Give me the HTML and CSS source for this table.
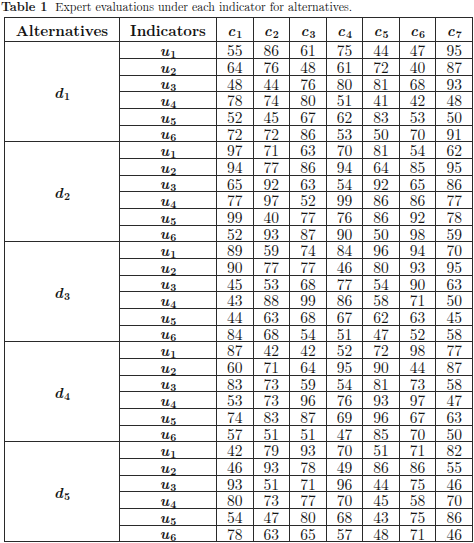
FILE: index.html
```html
<!DOCTYPE html>
<html>
<head>
<meta charset="utf-8">
<link rel="stylesheet" href="styles.css">
</head>
<body>
<div class="caption"><b class="cap-label">Table 1</b> Expert evaluations under each indicator for alternatives.</div>
<table class="tbl">
<colgroup>
<col class="c-alt"><col class="c-ind">
<col class="c-num"><col class="c-num"><col class="c-num"><col class="c-num"><col class="c-num"><col class="c-num"><col class="c-num">
</colgroup>
<thead>
<tr class="head">
<th class="word">Alternatives</th><th class="word">Indicators</th>
<th class="sym"><i>c</i><sub>1</sub></th><th class="sym"><i>c</i><sub>2</sub></th><th class="sym"><i>c</i><sub>3</sub></th><th class="sym"><i>c</i><sub>4</sub></th><th class="sym"><i>c</i><sub>5</sub></th><th class="sym"><i>c</i><sub>6</sub></th><th class="sym"><i>c</i><sub>7</sub></th>
</tr>
</thead>
<tbody>
<tr class="r17"><td class="sym alt" rowspan="6"><i>d</i><sub>1</sub></td><td class="sym ind"><i>u</i><sub>1</sub></td><td>55</td><td>86</td><td>61</td><td>75</td><td>44</td><td>47</td><td>95</td></tr>
<tr class="r17"><td class="sym ind"><i>u</i><sub>2</sub></td><td>64</td><td>76</td><td>48</td><td>61</td><td>72</td><td>40</td><td>87</td></tr>
<tr class="r16"><td class="sym ind"><i>u</i><sub>3</sub></td><td>48</td><td>44</td><td>76</td><td>80</td><td>81</td><td>68</td><td>93</td></tr>
<tr class="r17"><td class="sym ind"><i>u</i><sub>4</sub></td><td>78</td><td>74</td><td>80</td><td>51</td><td>41</td><td>42</td><td>48</td></tr>
<tr class="r17"><td class="sym ind"><i>u</i><sub>5</sub></td><td>52</td><td>45</td><td>67</td><td>62</td><td>83</td><td>53</td><td>50</td></tr>
<tr class="r16"><td class="sym ind"><i>u</i><sub>6</sub></td><td>72</td><td>72</td><td>86</td><td>53</td><td>50</td><td>70</td><td>91</td></tr>

<tr class="r17"><td class="sym alt" rowspan="6"><i>d</i><sub>2</sub></td><td class="sym ind"><i>u</i><sub>1</sub></td><td>97</td><td>71</td><td>63</td><td>70</td><td>81</td><td>54</td><td>62</td></tr>
<tr class="r17"><td class="sym ind"><i>u</i><sub>2</sub></td><td>94</td><td>77</td><td>86</td><td>94</td><td>64</td><td>85</td><td>95</td></tr>
<tr class="r16"><td class="sym ind"><i>u</i><sub>3</sub></td><td>65</td><td>92</td><td>63</td><td>54</td><td>92</td><td>65</td><td>86</td></tr>
<tr class="r17"><td class="sym ind"><i>u</i><sub>4</sub></td><td>77</td><td>97</td><td>52</td><td>99</td><td>86</td><td>86</td><td>77</td></tr>
<tr class="r17"><td class="sym ind"><i>u</i><sub>5</sub></td><td>99</td><td>40</td><td>77</td><td>76</td><td>86</td><td>92</td><td>78</td></tr>
<tr class="r16"><td class="sym ind"><i>u</i><sub>6</sub></td><td>52</td><td>93</td><td>87</td><td>90</td><td>50</td><td>98</td><td>59</td></tr>

<tr class="r17"><td class="sym alt" rowspan="6"><i>d</i><sub>3</sub></td><td class="sym ind"><i>u</i><sub>1</sub></td><td>89</td><td>59</td><td>74</td><td>84</td><td>96</td><td>94</td><td>70</td></tr>
<tr class="r17"><td class="sym ind"><i>u</i><sub>2</sub></td><td>90</td><td>77</td><td>77</td><td>46</td><td>80</td><td>93</td><td>95</td></tr>
<tr class="r16"><td class="sym ind"><i>u</i><sub>3</sub></td><td>45</td><td>53</td><td>68</td><td>77</td><td>54</td><td>90</td><td>63</td></tr>
<tr class="r17"><td class="sym ind"><i>u</i><sub>4</sub></td><td>43</td><td>88</td><td>99</td><td>86</td><td>58</td><td>71</td><td>50</td></tr>
<tr class="r17"><td class="sym ind"><i>u</i><sub>5</sub></td><td>44</td><td>63</td><td>68</td><td>67</td><td>62</td><td>63</td><td>45</td></tr>
<tr class="r16"><td class="sym ind"><i>u</i><sub>6</sub></td><td>84</td><td>68</td><td>54</td><td>51</td><td>47</td><td>52</td><td>58</td></tr>

<tr class="r17"><td class="sym alt" rowspan="6"><i>d</i><sub>4</sub></td><td class="sym ind"><i>u</i><sub>1</sub></td><td>87</td><td>42</td><td>42</td><td>52</td><td>72</td><td>98</td><td>77</td></tr>
<tr class="r17"><td class="sym ind"><i>u</i><sub>2</sub></td><td>60</td><td>71</td><td>64</td><td>95</td><td>90</td><td>44</td><td>87</td></tr>
<tr class="r16"><td class="sym ind"><i>u</i><sub>3</sub></td><td>83</td><td>73</td><td>59</td><td>54</td><td>81</td><td>73</td><td>58</td></tr>
<tr class="r17"><td class="sym ind"><i>u</i><sub>4</sub></td><td>53</td><td>73</td><td>96</td><td>76</td><td>93</td><td>97</td><td>47</td></tr>
<tr class="r17"><td class="sym ind"><i>u</i><sub>5</sub></td><td>74</td><td>83</td><td>87</td><td>69</td><td>96</td><td>67</td><td>63</td></tr>
<tr class="r16"><td class="sym ind"><i>u</i><sub>6</sub></td><td>57</td><td>51</td><td>51</td><td>47</td><td>85</td><td>70</td><td>50</td></tr>

<tr class="r17"><td class="sym alt" rowspan="6"><i>d</i><sub>5</sub></td><td class="sym ind"><i>u</i><sub>1</sub></td><td>42</td><td>79</td><td>93</td><td>70</td><td>51</td><td>71</td><td>82</td></tr>
<tr class="r17"><td class="sym ind"><i>u</i><sub>2</sub></td><td>46</td><td>93</td><td>78</td><td>49</td><td>86</td><td>86</td><td>55</td></tr>
<tr class="r16"><td class="sym ind"><i>u</i><sub>3</sub></td><td>93</td><td>51</td><td>71</td><td>96</td><td>44</td><td>75</td><td>46</td></tr>
<tr class="r17"><td class="sym ind"><i>u</i><sub>4</sub></td><td>80</td><td>73</td><td>77</td><td>70</td><td>45</td><td>58</td><td>70</td></tr>
<tr class="r17"><td class="sym ind"><i>u</i><sub>5</sub></td><td>54</td><td>47</td><td>80</td><td>68</td><td>43</td><td>75</td><td>86</td></tr>
<tr class="r16"><td class="sym ind"><i>u</i><sub>6</sub></td><td>78</td><td>63</td><td>65</td><td>57</td><td>48</td><td>71</td><td>46</td></tr>
</tbody>
</table>
</body>
</html>
```

FILE: styles.css
```css
html, body {
  margin: 0;
  padding: 0;
  background: #ffffff;
}

body {
  font-family: "Latin Modern Roman", "Liberation Serif", serif;
  color: #141414;
  width: 474px;
  height: 543px;
  overflow: hidden;
}

.caption {
  font-size: 12px;
  line-height: 12px;
  height: 12px;
  padding-left: 1px;
  white-space: nowrap;
}

.cap-label {
  font-size: 12.5px;
  margin-right: 4px;
}

.tbl {
  margin-top: 5px;
  margin-left: 4px;
  width: 468px;
  table-layout: fixed;
  border-collapse: collapse;
  font-size: 15.5px;
}

.c-alt { width: 115px; }
.c-ind { width: 97px; }
.c-num { width: 36.57px; }

.tbl th,
.tbl td {
  border: 1px solid #2a2a2a;
  padding: 0;
  text-align: center;
  vertical-align: middle;
  line-height: 12px;
  white-space: nowrap;
}

.head th {
  height: 23px;
}

.word {
  font-size: 15px;
  font-weight: bold;
}

.sym {
  font-weight: bold;
}

.sym i {
  font-style: italic;
  font-size: 15px;
  line-height: 12px;
}

.sym sub {
  font-size: 10.5px;
  line-height: 0;
  vertical-align: -2px;
  margin-left: 1px;
}

.ind i {
  vertical-align: 1px;
}

.ind sub {
  vertical-align: -1px;
}

.r17 td { height: 16px; }
.r16 td { height: 15px; }

.alt {
  padding-bottom: 20px;
}
```
